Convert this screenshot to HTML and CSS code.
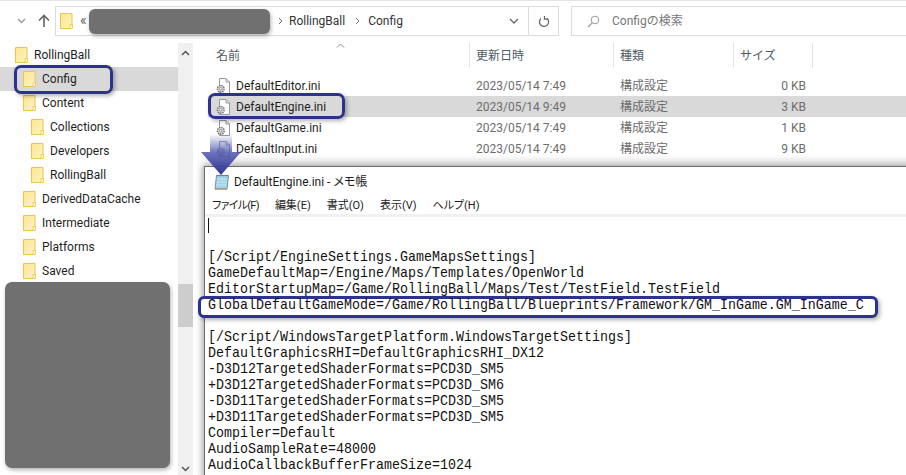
FILE: index.html
```html
<!DOCTYPE html>
<html lang="ja">
<head>
<meta charset="utf-8">
<title>DefaultEngine.ini</title>
<link rel="stylesheet" href="styles.css">
</head>
<body>
<svg class="defs" width="0" height="0" aria-hidden="true">
  <defs>
    <linearGradient id="fg" x1="0" y1="0" x2="1" y2="1">
      <stop offset="0" stop-color="#fde58c"/>
      <stop offset="1" stop-color="#fff4c8"/>
    </linearGradient>
    <linearGradient id="ag" x1="0" y1="0" x2="0" y2="1">
      <stop offset="0" stop-color="#5a60b4" stop-opacity="0"/>
      <stop offset=".45" stop-color="#5359b0" stop-opacity=".85"/>
      <stop offset="1" stop-color="#2f3596"/>
    </linearGradient>
    <symbol id="folder" viewBox="0 0 13 16">
      <path d="M.5.5h11.500v15H.5z" fill="url(#fg)" stroke="#edc64f"/>
      <path d="M10 15.500v-4h2.500v4z" fill="#fff6d2" stroke="#edc64f" stroke-width=".8"/>
    </symbol>
    <symbol id="ini" viewBox="0 0 14 16">
      <path d="M3.500.5h6.500l3.500 3.500v11.500h-10z" fill="#fff" stroke="#9a9a9a"/>
      <path d="M10 .5v3.500h3.500" fill="none" stroke="#9a9a9a"/>
      <circle cx="4.800" cy="10.800" r="3.400" fill="#d8d8d8" stroke="#6f6f6f" stroke-width="1.400" stroke-dasharray="1.400 .9"/>
      <circle cx="4.800" cy="10.800" r="1.300" fill="#fff" stroke="#777" stroke-width=".7"/>
    </symbol>
  </defs>
</svg>

<div class="explorer">
  <header class="toolbar">
    <div class="nav">
      <svg class="nav-chev" width="9" height="6" viewBox="0 0 9 6"><path d="M1 1l3.500 3.500L8 1" fill="none" stroke="#9a9a9a" stroke-width="1.400"/></svg>
      <svg class="nav-up" width="12" height="14" viewBox="0 0 12 14"><path d="M6 13V2M1 6.500L6 1.500l5 5" fill="none" stroke="#666" stroke-width="1.600"/></svg>
    </div>
    <div class="address">
      <svg class="addr-folder" width="13" height="16"><use href="#folder"/></svg>
      <span class="crumb-more">«</span>
      <span class="crumb-hidden"></span>
      <svg class="crumb-sep" width="5" height="8" viewBox="0 0 5 8"><path d="M1 1l3 3-3 3" fill="none" stroke="#777" stroke-width="1"/></svg>
      <span class="crumb crumb-first">RollingBall</span>
      <svg class="crumb-sep" width="5" height="8" viewBox="0 0 5 8"><path d="M1 1l3 3-3 3" fill="none" stroke="#777" stroke-width="1"/></svg>
      <span class="crumb">Config</span>
      <svg class="addr-drop" width="10" height="6" viewBox="0 0 10 6"><path d="M1 1l4 4 4-4" fill="none" stroke="#666" stroke-width="1.300"/></svg>
      <span class="addr-refresh">
        <svg width="12" height="13" viewBox="0 0 12 13"><path d="M8.800 3.200A4.600 4.600 0 1 1 3 3.400M6.500 1v3.200h3" fill="none" stroke="#666" stroke-width="1.300"/></svg>
      </span>
    </div>
    <div class="search">
      <svg width="13" height="13" viewBox="0 0 13 13"><circle cx="8" cy="5" r="3.800" fill="none" stroke="#999"/><path d="M5.200 7.800L1 12" stroke="#999" stroke-width="1.200"/></svg>
      <span>Configの検索</span>
    </div>
  </header>

  <div class="body">
    <nav class="tree">
      <div class="tree-row lv0"><svg width="13" height="16"><use href="#folder"/></svg><span>RollingBall</span></div>
      <div class="tree-row lv1 selected"><svg width="13" height="16"><use href="#folder"/></svg><span>Config</span></div>
      <div class="tree-row lv1"><svg width="13" height="16"><use href="#folder"/></svg><span>Content</span></div>
      <div class="tree-row lv2"><svg width="13" height="16"><use href="#folder"/></svg><span>Collections</span></div>
      <div class="tree-row lv2"><svg width="13" height="16"><use href="#folder"/></svg><span>Developers</span></div>
      <div class="tree-row lv2"><svg width="13" height="16"><use href="#folder"/></svg><span>RollingBall</span></div>
      <div class="tree-row lv1"><svg width="13" height="16"><use href="#folder"/></svg><span>DerivedDataCache</span></div>
      <div class="tree-row lv1"><svg width="13" height="16"><use href="#folder"/></svg><span>Intermediate</span></div>
      <div class="tree-row lv1"><svg width="13" height="16"><use href="#folder"/></svg><span>Platforms</span></div>
      <div class="tree-row lv1"><svg width="13" height="16"><use href="#folder"/></svg><span>Saved</span></div>
    </nav>
    <div class="scrollbar">
      <svg class="sb-up" width="9" height="6" viewBox="0 0 9 6"><path d="M1 5l3.500-3.500L8 5" fill="none" stroke="#555" stroke-width="1.500"/></svg>
      <div class="sb-thumb"></div>
      <svg class="sb-down" width="9" height="6" viewBox="0 0 9 6"><path d="M1 1l3.500 3.500L8 1" fill="none" stroke="#555" stroke-width="1.500"/></svg>
    </div>
    <main class="files">
      <div class="sort-mark"><svg width="9" height="5" viewBox="0 0 9 5"><path d="M1 4.500l3.500-3.500L8 4.500" fill="none" stroke="#888"/></svg></div>
      <div class="cols heads">
        <div class="head">名前</div>
        <div class="head sep">更新日時</div>
        <div class="head sep">種類</div>
        <div class="head sep end">サイズ</div>
      </div>
      <div class="cols row">
        <div class="name"><svg width="14" height="16"><use href="#ini"/></svg><span>DefaultEditor.ini</span></div>
        <div class="meta">2023/05/14 7:49</div><div class="meta">構成設定</div><div class="meta size">0 KB</div>
      </div>
      <div class="cols row current">
        <div class="name"><svg width="14" height="16"><use href="#ini"/></svg><span>DefaultEngine.ini</span></div>
        <div class="meta">2023/05/14 9:49</div><div class="meta">構成設定</div><div class="meta size">3 KB</div>
      </div>
      <div class="cols row">
        <div class="name"><svg width="14" height="16"><use href="#ini"/></svg><span>DefaultGame.ini</span></div>
        <div class="meta">2023/05/14 7:49</div><div class="meta">構成設定</div><div class="meta size">1 KB</div>
      </div>
      <div class="cols row">
        <div class="name"><svg width="14" height="16"><use href="#ini"/></svg><span>DefaultInput.ini</span></div>
        <div class="meta">2023/05/14 7:49</div><div class="meta">構成設定</div><div class="meta size">9 KB</div>
      </div>
    </main>
  </div>
</div>

<section class="notepad">
  <div class="np-title">
    <svg width="16" height="16" viewBox="0 0 16 16">
      <path d="M2.500 1.500h12l-1.500 13.500h-12z" fill="#9fd3ea" stroke="#7a8f96"/>
      <path d="M3 5h10M2.700 8h10M2.300 11h10" stroke="#c9e8f4"/>
      <path d="M2.500 1.500h12" stroke="#5c7f8f" stroke-dasharray="1 1" stroke-width="1.500"/>
      <path d="M1 15h12" stroke="#a8935c"/>
    </svg>
    <span>DefaultEngine.ini - メモ帳</span>
  </div>
  <div class="np-menu">
    <span class="menu-first">ファイル(F)</span><span>編集(E)</span><span>書式(O)</span><span>表示(V)</span><span>ヘルプ(H)</span>
  </div>
  <div class="np-text">
    <div class="ln"><i class="caret"></i></div>
    <div class="ln"></div>
    <div class="ln"><span>[/Script/EngineSettings.GameMapsSettings]</span></div>
    <div class="ln"><span>GameDefaultMap=/Engine/Maps/Templates/OpenWorld</span></div>
    <div class="ln"><span>EditorStartupMap=/Game/RollingBall/Maps/Test/TestField.TestField</span></div>
    <div class="ln hl"><span>GlobalDefaultGameMode=/Game/RollingBall/Blueprints/Framework/GM_InGame.GM_InGame_C</span></div>
    <div class="ln"></div>
    <div class="ln"><span>[/Script/WindowsTargetPlatform.WindowsTargetSettings]</span></div>
    <div class="ln"><span>DefaultGraphicsRHI=DefaultGraphicsRHI_DX12</span></div>
    <div class="ln"><span>-D3D12TargetedShaderFormats=PCD3D_SM5</span></div>
    <div class="ln"><span>+D3D12TargetedShaderFormats=PCD3D_SM6</span></div>
    <div class="ln"><span>-D3D11TargetedShaderFormats=PCD3D_SM5</span></div>
    <div class="ln"><span>+D3D11TargetedShaderFormats=PCD3D_SM5</span></div>
    <div class="ln"><span>Compiler=Default</span></div>
    <div class="ln"><span>AudioSampleRate=48000</span></div>
    <div class="ln"><span>AudioCallbackBufferFrameSize=1024</span></div>
  </div>
</section>

<div class="mark mark-config"></div>
<div class="mark mark-engine"></div>
<svg class="down-arrow" width="40" height="42" viewBox="0 0 40 42"><path d="M9 0h22v18h9L20 41 0 18h9z" fill="url(#ag)"/></svg>
<div class="redact redact-addr"></div>
<div class="redact redact-tree"></div>
</body>
</html>
```
FILE: styles.css
```css
*, *::before { box-sizing: border-box; }
html, body { margin: 0; padding: 0; }
body {
  position: relative;
  width: 906px;
  height: 475px;
  overflow: hidden;
  background: #fff;
  color: #1c1c1c;
  font: 12px/16px Roboto, "Noto Sans CJK JP", sans-serif;
}
.defs { position: absolute; }
svg { display: block; flex: none; }

.explorer { display: flex; flex-direction: column; height: 475px; border-top: 1px solid #e4e4e4; }

.toolbar { display: flex; align-items: flex-start; height: 42px; padding-top: 5px; flex: none; }
.nav { display: flex; align-items: center; gap: 12px; width: 55px; height: 30px; padding-left: 17px; flex: none; }
.address {
  display: flex; align-items: center; flex: none;
  width: 504px; height: 30px;
  border: 1px solid #dcdcdc;
  padding-left: 4px;
}
.addr-folder { margin-right: 7px; }
.crumb-more { width: 16px; font-size: 14px; color: #555; margin-top: -3px; }
.crumb-hidden { width: 175px; }
.crumb-sep { margin: 0 8px 0 7px; }
.crumb { color: #333; }
.crumb-first { margin: 0 3px 0 -2px; }
.addr-drop { margin-left: auto; margin-right: 9px; }
.addr-refresh { display: flex; align-items: center; justify-content: center; width: 30px; height: 28px; border-left: 1px solid #dcdcdc; }
.search {
  display: flex; align-items: center; gap: 12px; flex: none;
  width: 335px; height: 30px;
  margin-left: 12px; padding-left: 15px;
  border: 1px solid #dcdcdc; border-right: 0;
  color: #777;
}

.body { display: flex; flex: 1; min-height: 0; }
.tree { width: 178px; flex: none; }
.tree-row { display: flex; align-items: center; height: 24px; gap: 6px; color: #1f1f1f; }
.lv0 { padding-left: 15px; }
.lv1 { padding-left: 23px; }
.lv2 { padding-left: 31px; }
.tree-row.selected { background: #d9d9d9; }

.scrollbar { position: relative; display: flex; flex-direction: column; align-items: center; width: 15px; background: #f0f0f0; flex: none; }
.sb-up { margin-top: 7px; }
.sb-thumb { width: 15px; height: 43px; margin-top: 228px; background: #cdcdcd; }
.sb-down { margin-top: auto; margin-bottom: 3px; }

.files { position: relative; flex: 1; padding-left: 15px; }
.sort-mark { position: absolute; left: 143px; top: 0; }
.cols { display: grid; grid-template-columns: 261px 144px 120px 77px; }
.heads { grid-template-columns: 261px 144px 120px 80px; height: 25px; margin-bottom: 7px; }
.head { display: flex; align-items: center; padding-left: 8px; color: #4d5a66; }
.head.sep { border-left: 1px solid #e2e2e2; padding-left: 6px; }
.head.end { border-right: 1px solid #e2e2e2; }
.row { height: 21px; align-items: center; }
.row.current { background: #d9d9d9; }
.name { display: flex; align-items: center; gap: 6px; padding-left: 8px; color: #1f1f1f; }
.meta { padding-left: 7px; color: #6d6d6d; }
.meta.size { padding: 0 4px 0 0; text-align: right; }

.notepad {
  position: absolute; left: 204px; top: 166px;
  width: 720px; height: 320px;
  background: #fff;
  border: 1px solid #6c6c6c;
  box-shadow: 0 -3px 9px rgba(0, 0, 0, .28), -2px 0 5px rgba(0, 0, 0, .15);
}
.np-title { display: flex; align-items: center; gap: 4px; height: 30px; padding-left: 9px; font-feature-settings: "palt"; }
.np-menu { display: flex; gap: 16px; height: 20px; padding-left: 7px; align-items: center; border-bottom: 3px solid #f0f0f0; font-size: 11px; font-feature-settings: "palt"; }
.menu-first { letter-spacing: -.7px; }
.np-text { padding-left: 3px; font: 13.330px/16px "Liberation Mono", monospace; color: #111; }
.ln { height: 16px; white-space: pre; }
.ln span { display: block; transform: scaleY(1.05); }
.caret { display: block; width: 1px; height: 15px; margin-top: 1px; background: #111; }
.hl { position: relative; z-index: 1; }
.hl::before {
  content: ""; position: absolute; z-index: -1;
  left: -10px; top: -2px; width: 680px; height: 22px;
  background: #fff;
  border: 3px solid #2c3290;
  border-radius: 6px;
  box-shadow: 2px 2px 4px rgba(0, 0, 0, .3);
}

.mark { position: absolute; border: 3px solid #2c3290; border-radius: 7px; box-shadow: 2px 2px 4px rgba(0, 0, 0, .3); }
.mark-config { left: 14px; top: 65px; width: 99px; height: 29px; }
.mark-engine { left: 208px; top: 93px; width: 137px; height: 26px; }
.down-arrow { position: absolute; left: 201px; top: 134px; }
.redact { position: absolute; background: #707070; box-shadow: 1px 2px 4px rgba(0, 0, 0, .3); }
.redact-addr { left: 89px; top: 9px; width: 181px; height: 25px; border-radius: 6px; }
.redact-tree { left: 5px; top: 282px; width: 165px; height: 186px; border-radius: 7px; }
```
